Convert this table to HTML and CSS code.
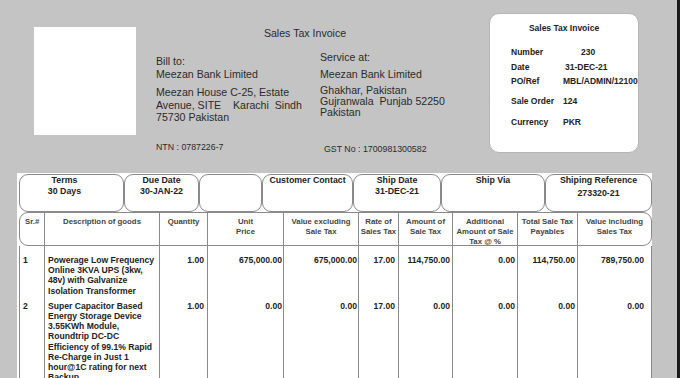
FILE: index.html
```html
<!DOCTYPE html>
<html>
<head>
<meta charset="utf-8">
<title>Sales Tax Invoice</title>
<link rel="stylesheet" href="styles.css">
</head>
<body>
<div class="page">
  <div class="top">
    <div class="logo"></div>
    <div class="mid">
      <div class="title">Sales Tax Invoice</div>
      <div class="parties">
        <div class="party bill">
          <div class="plabel">Bill to:</div>
          <div class="pname">Meezan Bank Limited</div>
          <div class="paddr">Meezan House C-25, Estate<br>Avenue, SITE&nbsp;&nbsp;&nbsp; Karachi&nbsp; Sindh<br>75730 Pakistan</div>
          <div class="ptax">NTN : 0787226-7</div>
        </div>
        <div class="party service">
          <div class="plabel">Service at:</div>
          <div class="pname">Meezan Bank Limited</div>
          <div class="paddr">Ghakhar, Pakistan<br>Gujranwala&nbsp; Punjab 52250<br>Pakistan</div>
          <div class="ptax">GST No : 1700981300582</div>
        </div>
      </div>
    </div>
    <div class="infobox">
      <div class="ibtitle">Sales Tax Invoice</div>
      <div class="ibrow r1"><span class="iblabel">Number</span><span class="ibval pad-num">230</span></div>
      <div class="ibrow r2"><span class="iblabel">Date</span><span class="ibval pad-date">31-DEC-21</span></div>
      <div class="ibrow r3"><span class="iblabel">PO/Ref</span><span class="ibval">MBL/ADMIN/12100</span></div>
      <div class="ibrow r4"><span class="iblabel">Sale Order</span><span class="ibval">124</span></div>
      <div class="ibrow r5"><span class="iblabel">Currency</span><span class="ibval">PKR</span></div>
    </div>
  </div>

  <div class="sheet">
    <div class="terms">
      <div class="tbox tb-terms"><div>Terms</div><div>30 Days</div></div>
      <div class="tbox"><div>Due Date</div><div>30-JAN-22</div></div>
      <div class="tbox"></div>
      <div class="tbox"><div>Customer Contact</div></div>
      <div class="tbox"><div>Ship Date</div><div>31-DEC-21</div></div>
      <div class="tbox"><div>Ship Via</div></div>
      <div class="tbox tb-ref"><div>Shiping Reference</div><div class="second">273320-21</div></div>
    </div>

    <div class="thead">
      <div class="h-sr">Sr.#</div>
      <div>Description of goods</div>
      <div>Quantity</div>
      <div>Unit<br>Price</div>
      <div>Value excluding<br>Sale Tax</div>
      <div>Rate of<br>Sales Tax</div>
      <div>Amount of<br>Sale Tax</div>
      <div>Additional<br>Amount of Sale<br>Tax @ %</div>
      <div>Total Sale Tax<br>Payables</div>
      <div>Value including<br>Sales Tax</div>
    </div>

    <div class="trow first">
      <div class="sr">1</div>
      <div class="desc">Powerage Low Frequency<br>Online 3KVA UPS (3kw,<br>48v) with Galvanize<br>Isolation Transformer</div>
      <div class="num c-qty">1.00</div>
      <div class="num c-unit">675,000.00</div>
      <div class="num c-excl">675,000.00</div>
      <div class="num c-rate">17.00</div>
      <div class="num c-amt">114,750.00</div>
      <div class="num c-add">0.00</div>
      <div class="num c-tot">114,750.00</div>
      <div class="num c-incl">789,750.00</div>
    </div>

    <div class="trow second">
      <div class="sr">2</div>
      <div class="desc">Super Capacitor Based<br>Energy Storage Device<br>3.55KWh Module,<br>Roundtrip DC-DC<br>Efficiency of 99.1% Rapid<br>Re-Charge in Just 1<br>hour@1C rating for next<br>Backup</div>
      <div class="num c-qty">1.00</div>
      <div class="num c-unit">0.00</div>
      <div class="num c-excl">0.00</div>
      <div class="num c-rate">17.00</div>
      <div class="num c-amt">0.00</div>
      <div class="num c-add">0.00</div>
      <div class="num c-tot">0.00</div>
      <div class="num c-incl">0.00</div>
    </div>
  </div>
</div>
</body>
</html>
```

FILE: styles.css
```css
* { box-sizing: border-box; }
html, body { margin: 0; padding: 0; }
body {
  width: 680px;
  height: 378px;
  overflow: hidden;
  background: #c4c4c4;
  font-family: "Liberation Sans", Arial, sans-serif;
  color: #222;
}
.page {
  width: 680px;
  height: 378px;
  border-right: 3px solid #1c1c1c;
}

/* ---------- top section ---------- */
.top {
  display: flex;
  align-items: flex-start;
  height: 173px;
}
.logo {
  margin: 27px 0 0 34px;
  width: 102px;
  height: 108px;
  background: #fff;
}
.mid {
  margin-left: 20px;
  width: 298px;
  padding-top: 27px;
  font-size: 10.6px;
  color: #2b2b2b;
}
.title {
  text-align: center;
  line-height: 12px;
}
.parties { display: flex; }
.party { white-space: nowrap; }
.bill { width: 164px; padding-top: 16px; }
.service { padding-top: 12px; }
.plabel, .pname { line-height: 13px; }
.service .pname { margin-top: 3.5px; }
.bill .paddr { margin-top: 5px; line-height: 12.5px; }
.service .paddr { margin-top: 4px; line-height: 11px; }
.ptax { font-size: 8.8px; line-height: 11px; }
.bill .ptax { margin-top: 18px; }
.service .ptax { margin-top: 26px; padding-left: 4px; }

.infobox {
  margin: 13px 0 0 35px;
  width: 150px;
  height: 140px;
  background: #fff;
  border: 1px solid #b4b4b4;
  border-radius: 10px;
  padding: 7px 0 0 21px;
  font-size: 8.5px;
  font-weight: bold;
  color: #222;
  overflow: hidden;
  white-space: nowrap;
}
.ibtitle {
  line-height: 14px;
  text-align: center;
  margin-left: -21px;
}
.ibrow { display: flex; line-height: 14px; }
.iblabel { width: 52px; flex: none; }
.r1 { margin-top: 10px; }
.r2 { margin-top: 1px; }
.r4 { margin-top: 6px; }
.r5 { margin-top: 7px; }
.pad-num { padding-left: 18px; }
.pad-date { padding-left: 2px; }

/* ---------- sheet ---------- */
.sheet {
  margin-left: 17px;
  width: 635px;
  height: 205px;
  background: #fff;
  padding: 1px 0 0 2px;
  overflow: hidden;
}
.terms {
  display: grid;
  grid-template-columns: 105px 75px 63px 91px 88px 104px 107px;
  height: 38px;
}
.tbox {
  border: 1px solid #8a8a8a;
  border-radius: 9px;
  text-align: center;
  font-weight: bold;
  font-size: 8.8px;
  line-height: 11px;
  color: #222;
}
.tb-terms { padding-right: 14px; }
.tb-ref .second { margin-top: 2px; }

.thead, .trow {
  display: grid;
  grid-template-columns: 24px 115px 48px 76px 75px 40px 54px 65px 60px 74px;
  width: 633px;
}
.thead {
  height: 34px;
  border: 1px solid #8a8a8a;
  border-radius: 9px;
  font-size: 7.8px;
  font-weight: bold;
  line-height: 10px;
  color: #444;
  text-align: center;
}
.thead > div { padding-top: 4px; white-space: nowrap; }
.thead > div + div { border-left: 1px solid #8a8a8a; }
.thead .h-sr { text-align: left; padding-left: 5px; }

.trow {
  border-left: 1px solid #8a8a8a;
  border-right: 1px solid #8a8a8a;
  font-size: 8.6px;
  font-weight: bold;
  line-height: 10.2px;
  color: #222;
  white-space: nowrap;
}
.trow > div + div { border-left: 1px solid #8a8a8a; }
.trow.first > div { padding-top: 9px; padding-bottom: 2px; }
.trow.second > div { padding-top: 3px; }
.sr { padding-left: 3px; }
.desc { padding-left: 3px; }
.num { text-align: right; padding-right: 2px; }
.c-qty { padding-right: 3px; }
.c-unit, .c-excl { padding-right: 1px; }
.c-rate { padding-right: 3px; }
.c-incl { padding-right: 7px; }
```
